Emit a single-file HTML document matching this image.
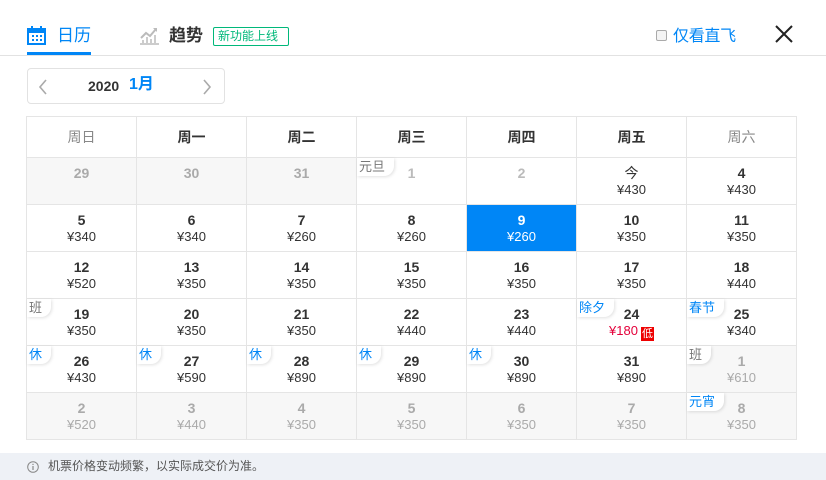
<!DOCTYPE html>
<html><head><meta charset="utf-8"><style>
*{margin:0;padding:0;box-sizing:border-box}
body{width:826px;height:480px;overflow:hidden;background:#fff;font-family:"Liberation Sans","Noto Sans CJK SC",sans-serif;position:relative;color:#333}
.hdr{position:absolute;left:0;top:0;width:826px;height:56px;border-bottom:1px solid #e2e2e2}
.tab1{position:absolute;left:27px;top:24px;font-size:17px;color:#0086f6;height:31px;border-bottom:3px solid #0086f6;width:64px;padding-left:30px;line-height:24px}
.tab2{position:absolute;left:140px;top:24px;font-size:17px;font-weight:bold;color:#333;line-height:24px;padding-left:29px}
.new{position:absolute;left:213px;top:27px;border:1px solid #00b87a;color:#00b87a;font-size:12px;line-height:17px;padding:0 4px;border-radius:2px;width:76px}
.chk{position:absolute;left:656px;top:30px;width:11px;height:11px;border:1px solid #aaa;border-radius:2px;background:#f4f4f4}
.direct{position:absolute;left:673px;top:25px;color:#0086f6;font-size:16px;line-height:24px;letter-spacing:-0.3px}
.mon{position:absolute;left:27px;top:68px;width:198px;height:36px;border:1px solid #e2e2e2;border-radius:4px}
.grid{position:absolute;left:26px;top:116px;width:771px;border-left:1px solid #e5e5e5;border-top:1px solid #e5e5e5;display:grid;grid-template-columns:repeat(7,110px);grid-template-rows:41px repeat(6,47px)}
.grid>div{border-right:1px solid #e5e5e5;border-bottom:1px solid #e5e5e5;position:relative;text-align:center}
.h{font-size:14px;font-weight:bold;line-height:40px;color:#333}
.h.g{color:#888;font-weight:normal}
.c b{display:block;font-size:14px;padding-top:7px;line-height:17px}
.c i{display:block;font-style:normal;font-size:13px;line-height:16px;color:#333}
.p{background:#f7f7f7}.p b,.p i{color:#aaa!important}
.w b{color:#bbb}
.s{background:#0086f6}.s b,.s i{color:#fff!important}
.t{position:absolute;left:0;top:0;background:#fff;font-size:13px;line-height:18px;padding:0 9px 0 2px;color:#0086f6;border-radius:0 0 10px 0;box-shadow:1px 1px 3px rgba(0,0,0,.12);font-style:normal;text-align:left}
.t.gr{color:#777}
.low{display:inline-block;background:#e00;color:#fff;font-size:11px;line-height:14px;padding:0 1px;margin-left:3px;vertical-align:-2px}
.foot{position:absolute;left:0;top:453px;width:826px;height:27px;background:#eef1f6;font-size:12px;color:#555;line-height:27px;padding-left:48px}
</style></head><body>
<div class="hdr">
<div class="tab1"><svg style="position:absolute;left:0;top:2px" width="19" height="19" viewBox="0 0 19 19"><rect x="1" y="3" width="17" height="15" fill="none" stroke="#0086f6" stroke-width="2"/><rect x="1" y="3" width="17" height="4" fill="#0086f6"/><rect x="4" y="0" width="2" height="4" fill="#0086f6"/><rect x="13" y="0" width="2" height="4" fill="#0086f6"/><g fill="#0086f6"><rect x="5" y="9" width="2" height="2"/><rect x="9" y="9" width="2" height="2"/><rect x="13" y="9" width="2" height="2"/><rect x="5" y="13" width="2" height="2"/><rect x="9" y="13" width="2" height="2"/><rect x="13" y="13" width="2" height="2"/></g></svg>日历</div>
<div class="tab2"><svg style="position:absolute;left:0;top:2px" width="19" height="19" viewBox="0 0 19 19"><path d="M1 12 L6 7 L10 10 L16 3" stroke="#bbb" stroke-width="2" fill="none"/><path d="M13 2 L17 2 L17 6Z" fill="#bbb"/><g fill="#ccc"><rect x="2" y="14" width="2" height="4"/><rect x="6" y="11" width="2" height="7"/><rect x="10" y="13" width="2" height="5"/><rect x="14" y="9" width="2" height="9"/><rect x="0" y="17" width="19" height="2"/></g></svg>趋势</div>
<div class="new">新功能上线</div>
<div class="chk"></div>
<div class="direct">仅看直飞</div>
<svg style="position:absolute;left:774px;top:24px" width="20" height="20" viewBox="0 0 20 20"><path d="M2 2L18 18M18 2L2 18" stroke="#222" stroke-width="2"/></svg>
</div>
<div class="mon">
<svg style="position:absolute;left:10px;top:10px" width="10" height="16" viewBox="0 0 10 16"><path d="M8 1L2 8L8 15" stroke="#aaa" stroke-width="1.6" fill="none"/></svg>
<span style="position:absolute;left:60px;top:8px;font-size:14px;font-weight:bold;line-height:18px">2020</span>
<span style="position:absolute;left:101px;top:6px;font-size:16px;font-weight:bold;color:#0086f6;line-height:20px">1月</span>
<svg style="position:absolute;left:174px;top:10px" width="10" height="16" viewBox="0 0 10 16"><path d="M2 1L8 8L2 15" stroke="#aaa" stroke-width="1.6" fill="none"/></svg>
</div>
<div class="grid">
<div class="h g">周日</div><div class="h">周一</div><div class="h">周二</div><div class="h">周三</div><div class="h">周四</div><div class="h">周五</div><div class="h g">周六</div>
<div class="c p"><b>29</b></div><div class="c p"><b>30</b></div><div class="c p"><b>31</b></div><div class="c w"><em class="t gr">元旦</em><b>1</b></div><div class="c w"><b>2</b></div><div class="c"><b style="font-weight:normal">今</b><i>¥430</i></div><div class="c"><b>4</b><i>¥430</i></div>
<div class="c"><b>5</b><i>¥340</i></div><div class="c"><b>6</b><i>¥340</i></div><div class="c"><b>7</b><i>¥260</i></div><div class="c"><b>8</b><i>¥260</i></div><div class="c s"><b>9</b><i>¥260</i></div><div class="c"><b>10</b><i>¥350</i></div><div class="c"><b>11</b><i>¥350</i></div>
<div class="c"><b>12</b><i>¥520</i></div><div class="c"><b>13</b><i>¥350</i></div><div class="c"><b>14</b><i>¥350</i></div><div class="c"><b>15</b><i>¥350</i></div><div class="c"><b>16</b><i>¥350</i></div><div class="c"><b>17</b><i>¥350</i></div><div class="c"><b>18</b><i>¥440</i></div>
<div class="c"><em class="t gr">班</em><b>19</b><i>¥350</i></div><div class="c"><b>20</b><i>¥350</i></div><div class="c"><b>21</b><i>¥350</i></div><div class="c"><b>22</b><i>¥440</i></div><div class="c"><b>23</b><i>¥440</i></div><div class="c"><em class="t">除夕</em><b>24</b><i style="color:#e4003a">¥180<span class="low">低</span></i></div><div class="c"><em class="t">春节</em><b>25</b><i>¥340</i></div>
<div class="c"><em class="t">休</em><b>26</b><i>¥430</i></div><div class="c"><em class="t">休</em><b>27</b><i>¥590</i></div><div class="c"><em class="t">休</em><b>28</b><i>¥890</i></div><div class="c"><em class="t">休</em><b>29</b><i>¥890</i></div><div class="c"><em class="t">休</em><b>30</b><i>¥890</i></div><div class="c"><b>31</b><i>¥890</i></div><div class="c p"><em class="t gr" style="background:#fff">班</em><b>1</b><i>¥610</i></div>
<div class="c p"><b>2</b><i>¥520</i></div><div class="c p"><b>3</b><i>¥440</i></div><div class="c p"><b>4</b><i>¥350</i></div><div class="c p"><b>5</b><i>¥350</i></div><div class="c p"><b>6</b><i>¥350</i></div><div class="c p"><b>7</b><i>¥350</i></div><div class="c p"><em class="t">元宵</em><b>8</b><i>¥350</i></div>
</div>
<div class="foot"><svg style="position:absolute;left:27px;top:8px" width="12" height="12" viewBox="0 0 12 12"><circle cx="6" cy="6" r="5.3" fill="none" stroke="#888"/><rect x="5.4" y="5" width="1.2" height="4" fill="#888"/><rect x="5.4" y="2.8" width="1.2" height="1.2" fill="#888"/></svg>机票价格变动频繁，以实际成交价为准。</div>
</body></html>
